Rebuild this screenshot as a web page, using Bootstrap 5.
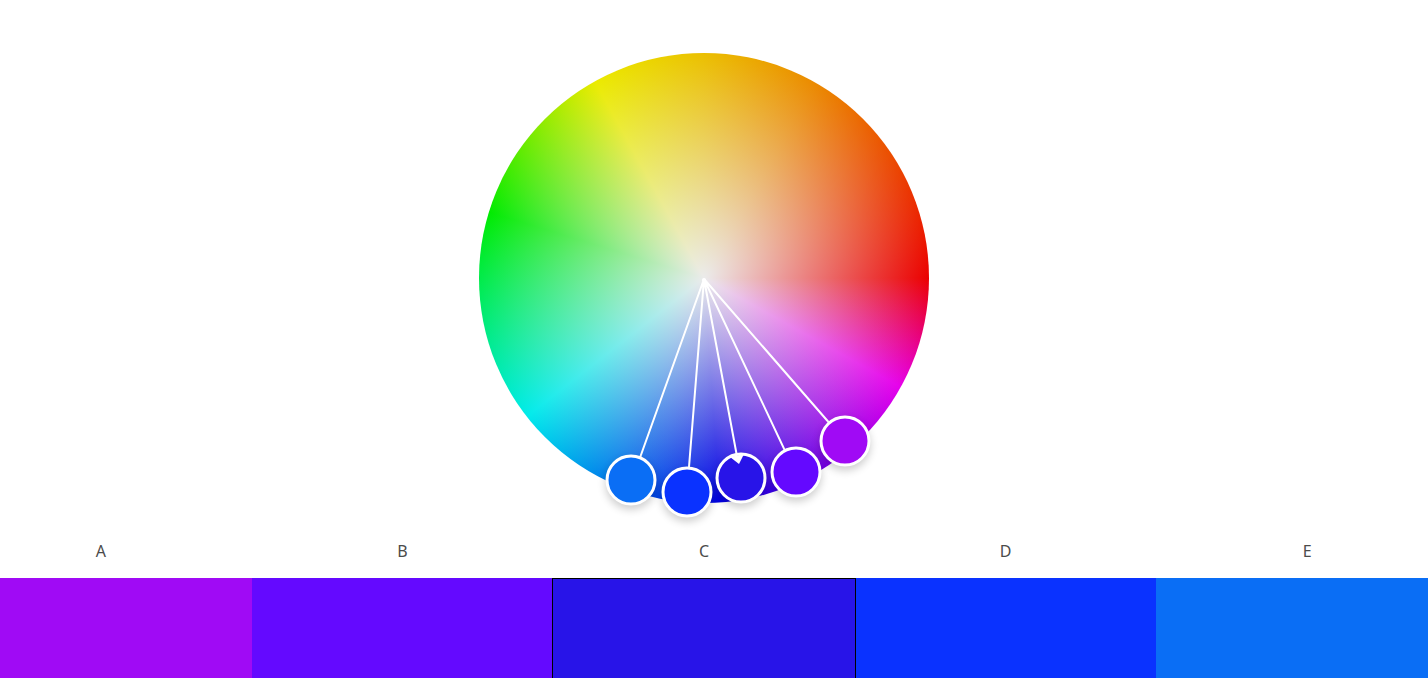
<!DOCTYPE html>
<html lang="en">
<head>
<meta charset="utf-8">
<meta name="viewport" content="width=device-width, initial-scale=1">
<title>Color wheel</title>
<link href="https://cdn.jsdelivr.net/npm/bootstrap@5.3.0/dist/css/bootstrap.min.css" rel="stylesheet">
<style>
  body { font-family: "Noto Sans", "Open Sans", sans-serif; color: #4b4b4b; background: #fff; }
  .stage { margin-left: -50px; margin-right: -30px; padding-top: 53px; }
  .wheel { width: 450px; height: 450px; }
  /* artist's wheel: hues are spread unevenly, red sits at three o'clock */
  .hues {
    background:
      radial-gradient(closest-side, #ebebeb, rgba(235, 235, 235, 0)),
      conic-gradient(#ebbf00 0deg, #eb8900 30deg, #eb0000 90deg, #e600eb 119deg, #7300e6 148deg, #0000e4 176deg,
        #0076eb 204deg, #00ebeb 232deg, #00eb00 287deg, #ebeb00 331deg, #ebbf00 360deg);
  }
  .handle {
    width: 51px; height: 51px; border: 3px solid #fff;
    box-shadow: 0 4px 8px rgba(0, 0, 0, .2);
  }
  .swatch-label { height: 75px; padding-top: 36px; font-size: 16px; line-height: 24px; }
  .swatch { min-height: 100px; }
  .swatch.active { border: 1px solid #000 !important; border-bottom: 0 !important; margin: 0 -1px; z-index: 1; }
  .tone-a { background: #a00af5; }
  .tone-b { background: #6409ff; }
  .tone-c { background: #2814e8; }
  .tone-d { background: #0a32ff; }
  .tone-e { background: #0a6ef5; }
</style>
</head>
<body class="overflow-hidden">
<main class="stage min-vh-100 d-flex flex-column">
  <div class="wheel position-relative mx-auto flex-shrink-0">
    <div class="hues w-100 h-100 rounded-circle"></div>
    <svg class="position-absolute top-0 start-0 w-100 h-100" viewBox="0 0 450 450" fill="none" stroke="#fff" stroke-width="2" aria-hidden="true">
      <path d="M225 226L366 388M225 226L316 419M225 226L262 425M225 226L208 439M225 226L153 427"/>
      <circle cx="225" cy="227" r="1" fill="#fff"/>
    </svg>
    <button type="button" aria-label="Color E" class="handle tone-e p-0 rounded-circle position-absolute translate-middle" style="left:33.8%;top:94.8%"></button>
    <button type="button" aria-label="Color D" class="handle tone-d p-0 rounded-circle position-absolute translate-middle" style="left:46.2%;top:97.5%"></button>
    <button type="button" aria-label="Color C, base" class="handle tone-c p-0 rounded-circle position-absolute translate-middle" style="left:58.2%;top:94.4%"></button>
    <button type="button" aria-label="Color B" class="handle tone-b p-0 rounded-circle position-absolute translate-middle" style="left:70.4%;top:93%"></button>
    <button type="button" aria-label="Color A" class="handle tone-a p-0 rounded-circle position-absolute translate-middle" style="left:81.3%;top:86.2%"></button>
    <svg class="position-absolute top-0 start-0 w-100 h-100 pe-none" viewBox="0 0 450 450" aria-hidden="true">
      <path d="M251 404L265 401L260 411Z" fill="#fff"/>
    </svg>
  </div>
  <div class="row row-cols-5 g-0 flex-grow-1">
    <div class="col d-flex flex-column"><div class="swatch-label text-center" id="label-a">A</div><button type="button" aria-labelledby="label-a" class="swatch tone-a border-0 p-0 flex-grow-1"></button></div>
    <div class="col d-flex flex-column"><div class="swatch-label text-center" id="label-b">B</div><button type="button" aria-labelledby="label-b" class="swatch tone-b border-0 p-0 flex-grow-1"></button></div>
    <div class="col d-flex flex-column"><div class="swatch-label text-center" id="label-c">C</div><button type="button" aria-labelledby="label-c" class="swatch active tone-c p-0 flex-grow-1 position-relative"></button></div>
    <div class="col d-flex flex-column"><div class="swatch-label text-center" id="label-d">D</div><button type="button" aria-labelledby="label-d" class="swatch tone-d border-0 p-0 flex-grow-1"></button></div>
    <div class="col d-flex flex-column"><div class="swatch-label text-center" id="label-e">E</div><button type="button" aria-labelledby="label-e" class="swatch tone-e border-0 p-0 flex-grow-1"></button></div>
  </div>
</main>
<script src="https://cdn.jsdelivr.net/npm/bootstrap@5.3.0/dist/js/bootstrap.bundle.min.js"></script>
</body>
</html>
